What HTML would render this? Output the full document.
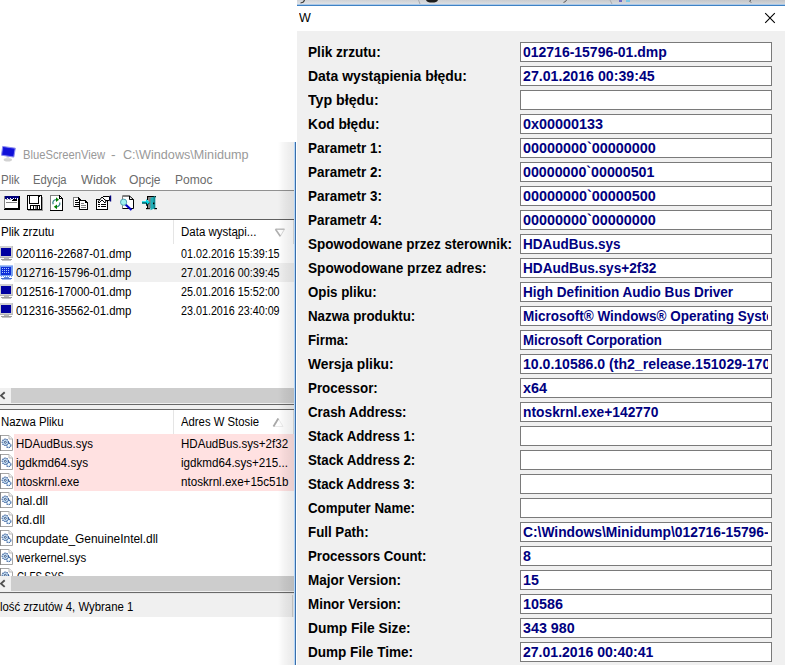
<!DOCTYPE html><html><head><meta charset="utf-8"><title>BlueScreenView</title><style>
html,body{margin:0;padding:0}
body{width:785px;height:665px;overflow:hidden;background:#fff;position:relative;font-family:"Liberation Sans",sans-serif}
div,span,svg{position:absolute}
.s,.b{white-space:pre;line-height:1;transform-origin:0 0;display:block}
.s{font-size:12px;color:#000}
.b{font-size:14px;font-weight:bold;color:#000}
.v{color:#000080}
.ttl{color:#999}
.mnu{color:#6b6b6b}
.f{left:520px;width:250px;height:18px;background:#fff;border:1px solid #7a7a7a;overflow:hidden}
.f .c{left:0;top:0;width:246.6px;height:18px;overflow:hidden}
.f .b{left:2.1px}
</style></head><body>
<div style="left:297px;top:0px;width:488px;height:4px;background:#d6dae0;background:linear-gradient(180deg,rgba(0,0,0,.06),rgba(255,255,255,.1)),linear-gradient(90deg,#dde0e4,#cdd0d4)"></div>
<svg style="left:297px;top:0" width="488" height="4" viewBox="0 0 488 4"><path d="M7.5 0 Q7 2.6 3.5 3" fill="none" stroke="#3a3a3a" stroke-width="1.2"/><path d="M121.5 0 L123 4" stroke="#a8aaae" stroke-width="1"/><path d="M129 0 H141 Q140 2.6 135 2.6 Q130 2.6 129 0Z" fill="#1c1c1c"/><path d="M269.5 0 Q269 2 266.5 2.4" fill="none" stroke="#555" stroke-width="1"/><path d="M313 0 L315 4" stroke="#a8aaae" stroke-width="1"/><rect x="322" y="0" width="3" height="2" fill="#6a6ac8"/><rect x="329" y="0" width="4" height="2" fill="#7ac8e8"/><path d="M453.5 0 Q452 1.5 454 2.5" fill="none" stroke="#444" stroke-width="1"/></svg>
<div style="left:297px;top:4px;width:488px;height:1px;background:#a9c8e8"></div>
<div style="left:297px;top:5px;width:488px;height:1px;background:#3f82c4"></div>
<div style="left:297px;top:31px;width:488px;height:634px;background:#f0f0f0"></div>
<div style="left:0px;top:190px;width:294px;height:1px;background:#919191"></div>
<div style="left:0px;top:191px;width:294px;height:28px;background:#f0f0f0"></div>
<div style="left:0px;top:219px;width:294px;height:1px;background:#5f5f5f"></div>
<div style="left:173px;top:220px;width:1px;height:24px;background:#e5e5e5"></div>
<div style="left:293px;top:220px;width:1px;height:24px;background:#e0e0e0"></div>
<div style="left:14px;top:263px;width:280px;height:19px;background:#f0f0f0"></div>
<div style="left:0px;top:388px;width:294px;height:16px;background:#f0f0f0"></div>
<div style="left:11px;top:388px;width:283px;height:15px;background:#cdcdcd"></div>
<div style="left:0px;top:404px;width:294px;height:1px;background:#696969"></div>
<div style="left:0px;top:405px;width:294px;height:4px;background:#f0f0f0"></div>
<div style="left:0px;top:409px;width:294px;height:1px;background:#696969"></div>
<div style="left:173px;top:410px;width:1px;height:24px;background:#e5e5e5"></div>
<div style="left:293px;top:410px;width:1px;height:24px;background:#e0e0e0"></div>
<div style="left:14px;top:434px;width:280px;height:57px;background:#ffe1e1"></div>
<div style="left:0px;top:576px;width:294px;height:16px;background:#f0f0f0"></div>
<div style="left:11px;top:576px;width:283px;height:15px;background:#cdcdcd"></div>
<div style="left:0px;top:592px;width:294px;height:1px;background:#696969"></div>
<div style="left:0px;top:593px;width:294px;height:24px;background:#f0f0f0"></div>
<div style="left:0px;top:593px;width:294px;height:1px;background:#e6e6e6"></div>
<div style="left:292px;top:595px;width:1px;height:22px;background:#cfcfcf"></div>
<svg style="left:0px;top:144px" width="20" height="20" viewBox="0 0 20 20"><ellipse cx="7.8" cy="15.8" rx="4.2" ry="1.8" fill="#d2d2d2"/><path d="M6.5 12 L9.5 12.5 L9 15.5 L6.5 15Z" fill="#dcdcdc"/><path d="M2.7 2.4 L15.3 4.2 L13.8 13.1 L1.5 11.2Z" fill="#1a1ae0" stroke="#8c8cf0" stroke-width="1"/><path d="M4 4 L13.8 5.4 L12.8 11.6 L3.1 10.2Z" fill="#1010d8"/></svg>
<svg style="left:4px;top:196px" width="16" height="14" viewBox="0 0 16 14" shape-rendering="crispEdges"><rect x="0" y="0" width="16" height="14" fill="#000"/><rect x="0" y="0" width="15" height="13" fill="#808080"/><rect x="1" y="1" width="14" height="12" fill="#000"/><rect x="1" y="1" width="13" height="11" fill="#fff"/><rect x="1" y="0" width="14" height="3" fill="#00007a"/><rect x="2" y="3" width="2" height="1" fill="#9a9ab0"/><rect x="5" y="3" width="2" height="1" fill="#9a9ab0"/><rect x="8" y="3" width="5" height="2" fill="#000"/><rect x="8" y="3" width="1" height="1" fill="#fff"/><rect x="2" y="6" width="11" height="1" fill="#808080"/><rect x="3" y="2" width="1" height="1" fill="#fff"/><rect x="6" y="2" width="1" height="1" fill="#fff"/><rect x="9" y="2" width="1" height="1" fill="#fff"/><rect x="11" y="2" width="1" height="1" fill="#fff"/><rect x="13" y="2" width="1" height="1" fill="#fff"/></svg>
<svg style="left:27px;top:195px" width="16" height="16" viewBox="0 0 16 16" shape-rendering="crispEdges"><rect x="0" y="0" width="15" height="15" fill="#000"/><rect x="1" y="1" width="13" height="13" fill="#fff"/><rect x="2" y="0" width="1" height="9" fill="#000"/><rect x="11" y="0" width="1" height="9" fill="#000"/><rect x="2" y="8" width="10" height="1" fill="#000"/><rect x="3" y="1" width="8" height="7" fill="#fff"/><rect x="12" y="1" width="2" height="8" fill="#fff"/><rect x="12" y="1" width="1" height="1" fill="#000"/><rect x="13" y="2" width="1" height="1" fill="#fff"/><rect x="3" y="10" width="10" height="1" fill="#000"/><rect x="3" y="10" width="1" height="4" fill="#000"/><rect x="12" y="10" width="1" height="4" fill="#000"/><rect x="4" y="11" width="8" height="3" fill="#fff"/><rect x="6" y="11" width="1" height="3" fill="#000"/><rect x="8" y="11" width="2" height="3" fill="#808080"/><rect x="10" y="11" width="1" height="3" fill="#000"/><rect x="15" y="2" width="1" height="14" fill="#9a9a9a"/><rect x="1" y="15" width="15" height="1" fill="#9a9a9a"/></svg>
<svg style="left:50px;top:195px" width="14" height="16" viewBox="0 0 14 16" shape-rendering="crispEdges"><path d="M0.5 0.5 H9.5 L12.5 3.5 V15.5 H0.5Z" fill="#fff" stroke="none"/><rect x="0" y="0" width="10" height="1" fill="#808080"/><rect x="0" y="0" width="1" height="16" fill="#808080"/><rect x="12" y="3" width="1" height="13" fill="#000"/><rect x="0" y="15" width="13" height="1" fill="#000"/><rect x="9" y="0" width="1" height="4" fill="#000"/><rect x="9" y="3" width="4" height="1" fill="#000"/><rect x="10" y="1" width="1" height="1" fill="#000"/><rect x="11" y="2" width="1" height="1" fill="#000"/><rect x="10" y="2" width="1" height="1" fill="#fff"/><g shape-rendering="auto"><path d="M3.2 9.2 A3.2 3.2 0 0 1 6.6 4.6" fill="none" stroke="#3a8a8a" stroke-width="1.3"/><path d="M6 2.3 L9 4.8 L6 7Z" fill="#008000"/><path d="M9.6 7.4 A3.2 3.2 0 0 1 6.4 11.8" fill="none" stroke="#3a8a8a" stroke-width="1.3"/><path d="M7 9.6 L3.8 11.8 L7 14.2Z" fill="#008000"/></g></svg>
<svg style="left:73px;top:197px" width="15" height="13" viewBox="0 0 15 13" shape-rendering="crispEdges"><rect x="0" y="0" width="8" height="10" fill="#000"/><rect x="1" y="1" width="6" height="8" fill="#fff"/><rect x="5" y="0" width="3" height="3" fill="#f0f0f0"/><rect x="5" y="0" width="1" height="3" fill="#000"/><rect x="5" y="2" width="3" height="1" fill="#000"/><rect x="6" y="1" width="1" height="1" fill="#000"/><rect x="2" y="3" width="3" height="1" fill="#000"/><rect x="2" y="5" width="4" height="1" fill="#000"/><rect x="2" y="7" width="4" height="1" fill="#000"/><rect x="6" y="3" width="9" height="10" fill="#000"/><rect x="7" y="4" width="7" height="8" fill="#fff"/><rect x="12" y="3" width="3" height="3" fill="#f0f0f0"/><rect x="12" y="3" width="1" height="3" fill="#000"/><rect x="12" y="5" width="3" height="1" fill="#000"/><rect x="13" y="4" width="1" height="1" fill="#000"/><rect x="8" y="6" width="3" height="1" fill="#808080"/><rect x="8" y="8" width="5" height="1" fill="#808080"/><rect x="8" y="10" width="5" height="1" fill="#808080"/><rect x="0" y="0" width="1" height="10" fill="#808080"/><rect x="0" y="0" width="5" height="1" fill="#808080"/></svg>
<svg style="left:96px;top:195px" width="16" height="16" viewBox="0 0 16 16" shape-rendering="crispEdges"><rect x="0" y="4" width="12" height="11" fill="#000"/><rect x="1" y="5" width="10" height="9" fill="#fff"/><rect x="2" y="9" width="2" height="1" fill="#000"/><rect x="5" y="9" width="5" height="1" fill="#000"/><rect x="2" y="11" width="2" height="1" fill="#000"/><rect x="5" y="11" width="5" height="1" fill="#000"/><g shape-rendering="auto"><path d="M2 7 L6 2 L10 6 L9 8 L6 5 L3 8Z" fill="#fff" stroke="#000" stroke-width="1"/><path d="M7 1.5 H13.5 V5.5 H10" fill="#fff" stroke="#000" stroke-width="1"/><path d="M14.5 0.5 V6.5" stroke="#00007a" stroke-width="1.4"/></g></svg>
<svg style="left:120px;top:195px" width="16" height="16" viewBox="0 0 16 16"><g shape-rendering="auto"><path d="M2.5 1 H9.5 L13.5 4.5 V13.5 H2.5Z" fill="#fff" stroke="#000" stroke-width="1"/><path d="M2.5 1 H9.5" stroke="#808080" stroke-width="1"/><path d="M2.5 1 V13.5" stroke="#808080"/><path d="M9.5 1 V4.5 H13.5" fill="none" stroke="#000" stroke-width="1"/><path d="M5.5 9.5 L11.5 15" stroke="#0000c8" stroke-width="2.2"/><circle cx="3.6" cy="7.2" r="3.1" fill="#9ff0f0" stroke="#50a0b0" stroke-width="1"/></g></svg>
<svg style="left:142px;top:195px" width="16" height="16" viewBox="0 0 16 16"><g shape-rendering="auto"><rect x="5" y="1" width="9" height="1.3" fill="#000"/><rect x="5" y="1" width="1.3" height="4" fill="#000"/><rect x="5" y="9" width="1.3" height="5" fill="#000"/><rect x="4" y="13" width="4" height="1.2" fill="#000"/><rect x="12" y="13" width="3" height="1.2" fill="#000"/><rect x="6.3" y="2.3" width="4" height="11" fill="#808080"/><path d="M8.5 3 L13.2 1.2 V13 L8.5 15.3Z" fill="#20b0b8"/><path d="M11.5 2 L13.2 1.2 V13 L11.5 13.8Z" fill="#108890"/><rect x="11" y="7.6" width="1.4" height="1.6" fill="#000"/><path d="M0 6.2 H4 V4 L8 7.5 L4 11 V8.8 H0Z" fill="#00d8e8"/><path d="M0 8 H4.5 V10.5 L7.5 8" fill="none" stroke="#000" stroke-width=".8"/></g></svg>
<svg style="left:0px;top:246px" width="13" height="15" viewBox="0 0 13 15" shape-rendering="crispEdges"><rect x="0" y="0" width="13" height="12" fill="#d0d0d0"/><rect x="0" y="11" width="13" height="1" fill="#b4b4b4"/><rect x="12" y="0" width="1" height="12" fill="#c0c0c0"/><rect x="1" y="2" width="10" height="8" fill="#0000a0"/><rect x="4" y="12" width="5" height="1" fill="#b8b8b8"/><rect x="1" y="13" width="11" height="1" fill="#9c9c9c"/><rect x="2" y="14" width="9" height="1" fill="#c4c4c4"/></svg>
<svg style="left:0px;top:265px" width="13" height="15" viewBox="0 0 13 15" shape-rendering="crispEdges"><rect x="0" y="0" width="13" height="12" fill="#78a0f0"/><rect x="1" y="2" width="10" height="8" fill="#1030d8"/><rect x="2" y="3" width="1" height="1" fill="#b0c8ff"/><rect x="4" y="3" width="1" height="1" fill="#b0c8ff"/><rect x="6" y="3" width="1" height="1" fill="#b0c8ff"/><rect x="8" y="3" width="1" height="1" fill="#b0c8ff"/><rect x="2" y="5" width="1" height="1" fill="#b0c8ff"/><rect x="4" y="5" width="1" height="1" fill="#b0c8ff"/><rect x="6" y="5" width="1" height="1" fill="#b0c8ff"/><rect x="8" y="5" width="1" height="1" fill="#b0c8ff"/><rect x="2" y="7" width="1" height="1" fill="#b0c8ff"/><rect x="4" y="7" width="1" height="1" fill="#b0c8ff"/><rect x="6" y="7" width="1" height="1" fill="#b0c8ff"/><rect x="8" y="7" width="1" height="1" fill="#b0c8ff"/><rect x="0" y="0" width="13" height="1" fill="#a8c4f8"/><rect x="0" y="11" width="1" height="1" fill="#fff"/><rect x="2" y="11" width="1" height="1" fill="#fff"/><rect x="4" y="11" width="1" height="1" fill="#fff"/><rect x="6" y="11" width="1" height="1" fill="#fff"/><rect x="8" y="11" width="1" height="1" fill="#fff"/><rect x="10" y="11" width="1" height="1" fill="#fff"/><rect x="12" y="11" width="1" height="1" fill="#fff"/><rect x="4" y="12" width="5" height="1" fill="#6088e0"/><rect x="1" y="13" width="11" height="1" fill="#4870d0"/><rect x="2" y="14" width="9" height="1" fill="#a0b8f0"/></svg>
<svg style="left:0px;top:284px" width="13" height="15" viewBox="0 0 13 15" shape-rendering="crispEdges"><rect x="0" y="0" width="13" height="12" fill="#d0d0d0"/><rect x="0" y="11" width="13" height="1" fill="#b4b4b4"/><rect x="12" y="0" width="1" height="12" fill="#c0c0c0"/><rect x="1" y="2" width="10" height="8" fill="#0000a0"/><rect x="4" y="12" width="5" height="1" fill="#b8b8b8"/><rect x="1" y="13" width="11" height="1" fill="#9c9c9c"/><rect x="2" y="14" width="9" height="1" fill="#c4c4c4"/></svg>
<svg style="left:0px;top:303px" width="13" height="15" viewBox="0 0 13 15" shape-rendering="crispEdges"><rect x="0" y="0" width="13" height="12" fill="#d0d0d0"/><rect x="0" y="11" width="13" height="1" fill="#b4b4b4"/><rect x="12" y="0" width="1" height="12" fill="#c0c0c0"/><rect x="1" y="2" width="10" height="8" fill="#0000a0"/><rect x="4" y="12" width="5" height="1" fill="#b8b8b8"/><rect x="1" y="13" width="11" height="1" fill="#9c9c9c"/><rect x="2" y="14" width="9" height="1" fill="#c4c4c4"/></svg>
<svg style="left:274px;top:228px" width="12" height="10" viewBox="0 0 12 10"><path d="M1.5 1.2 H10.5 L6.3 8.3Z" fill="#fff" stroke="#dadada" stroke-width="1"/><path d="M1.5 1.2 H10.5" stroke="#b8b8b8" stroke-width="1.2"/><path d="M1.5 1.2 L6.3 8.3" stroke="#b0b0b0" stroke-width="1.6"/></svg>
<svg style="left:272px;top:417px" width="14" height="11" viewBox="0 0 14 11"><path d="M1.5 9.5 H11 L6.3 1.5Z" fill="#fff" stroke="#ececec" stroke-width="1"/><path d="M1.5 9.5 L6.3 1.5" stroke="#a8a8a8" stroke-width="1.8"/></svg>
<svg style="left:0px;top:388px" width="8" height="15" viewBox="0 0 8 15"><path d="M4.7 4.3 L1 7.6 L4.7 10.9" fill="none" stroke="#505050" stroke-width="1.9"/></svg>
<svg style="left:0px;top:576px" width="8" height="15" viewBox="0 0 8 15"><path d="M4.7 4.3 L1 7.6 L4.7 10.9" fill="none" stroke="#505050" stroke-width="1.9"/></svg>
<svg style="left:0px;top:435px" width="14" height="16" viewBox="0 0 14 16"><path d="M-2.5 0.5 H9 L12.5 4 V15.5 H-2.5Z" fill="#fff" stroke="#a6a6a6" stroke-width="1"/><path d="M9 0.5 V4 H12.5" fill="#f4f4f4" stroke="#b8b8b8" stroke-width="1"/><path d="M0.5 0 V16" stroke="#8a8a8a" stroke-width="1"/><circle cx="8.6" cy="10.4" r="2.3" fill="#d8ecfa" stroke="#3c64a0" stroke-width="1.1" stroke-dasharray="1.3 .7"/><circle cx="5.3" cy="7.3" r="3.1" fill="#cfe6f8" stroke="#365c98" stroke-width="1.2" stroke-dasharray="1.4 .8"/><circle cx="5.3" cy="7.3" r="1" fill="#fff" stroke="#1c3c70" stroke-width=".8"/><circle cx="8.6" cy="10.4" r=".7" fill="#fff"/></svg>
<svg style="left:0px;top:454px" width="14" height="16" viewBox="0 0 14 16"><path d="M-2.5 0.5 H9 L12.5 4 V15.5 H-2.5Z" fill="#fff" stroke="#a6a6a6" stroke-width="1"/><path d="M9 0.5 V4 H12.5" fill="#f4f4f4" stroke="#b8b8b8" stroke-width="1"/><path d="M0.5 0 V16" stroke="#8a8a8a" stroke-width="1"/><circle cx="8.6" cy="10.4" r="2.3" fill="#d8ecfa" stroke="#3c64a0" stroke-width="1.1" stroke-dasharray="1.3 .7"/><circle cx="5.3" cy="7.3" r="3.1" fill="#cfe6f8" stroke="#365c98" stroke-width="1.2" stroke-dasharray="1.4 .8"/><circle cx="5.3" cy="7.3" r="1" fill="#fff" stroke="#1c3c70" stroke-width=".8"/><circle cx="8.6" cy="10.4" r=".7" fill="#fff"/></svg>
<svg style="left:0px;top:473px" width="14" height="16" viewBox="0 0 14 16"><path d="M-2.5 0.5 H9 L12.5 4 V15.5 H-2.5Z" fill="#fff" stroke="#a6a6a6" stroke-width="1"/><path d="M9 0.5 V4 H12.5" fill="#f4f4f4" stroke="#b8b8b8" stroke-width="1"/><path d="M0.5 0 V16" stroke="#8a8a8a" stroke-width="1"/><circle cx="8.6" cy="10.4" r="2.3" fill="#d8ecfa" stroke="#3c64a0" stroke-width="1.1" stroke-dasharray="1.3 .7"/><circle cx="5.3" cy="7.3" r="3.1" fill="#cfe6f8" stroke="#365c98" stroke-width="1.2" stroke-dasharray="1.4 .8"/><circle cx="5.3" cy="7.3" r="1" fill="#fff" stroke="#1c3c70" stroke-width=".8"/><circle cx="8.6" cy="10.4" r=".7" fill="#fff"/></svg>
<svg style="left:0px;top:492px" width="14" height="16" viewBox="0 0 14 16"><path d="M-2.5 0.5 H9 L12.5 4 V15.5 H-2.5Z" fill="#fff" stroke="#a6a6a6" stroke-width="1"/><path d="M9 0.5 V4 H12.5" fill="#f4f4f4" stroke="#b8b8b8" stroke-width="1"/><path d="M0.5 0 V16" stroke="#8a8a8a" stroke-width="1"/><circle cx="8.6" cy="10.4" r="2.3" fill="#d8ecfa" stroke="#3c64a0" stroke-width="1.1" stroke-dasharray="1.3 .7"/><circle cx="5.3" cy="7.3" r="3.1" fill="#cfe6f8" stroke="#365c98" stroke-width="1.2" stroke-dasharray="1.4 .8"/><circle cx="5.3" cy="7.3" r="1" fill="#fff" stroke="#1c3c70" stroke-width=".8"/><circle cx="8.6" cy="10.4" r=".7" fill="#fff"/></svg>
<svg style="left:0px;top:511px" width="14" height="16" viewBox="0 0 14 16"><path d="M-2.5 0.5 H9 L12.5 4 V15.5 H-2.5Z" fill="#fff" stroke="#a6a6a6" stroke-width="1"/><path d="M9 0.5 V4 H12.5" fill="#f4f4f4" stroke="#b8b8b8" stroke-width="1"/><path d="M0.5 0 V16" stroke="#8a8a8a" stroke-width="1"/><circle cx="8.6" cy="10.4" r="2.3" fill="#d8ecfa" stroke="#3c64a0" stroke-width="1.1" stroke-dasharray="1.3 .7"/><circle cx="5.3" cy="7.3" r="3.1" fill="#cfe6f8" stroke="#365c98" stroke-width="1.2" stroke-dasharray="1.4 .8"/><circle cx="5.3" cy="7.3" r="1" fill="#fff" stroke="#1c3c70" stroke-width=".8"/><circle cx="8.6" cy="10.4" r=".7" fill="#fff"/></svg>
<svg style="left:0px;top:530px" width="14" height="16" viewBox="0 0 14 16"><path d="M-2.5 0.5 H9 L12.5 4 V15.5 H-2.5Z" fill="#fff" stroke="#a6a6a6" stroke-width="1"/><path d="M9 0.5 V4 H12.5" fill="#f4f4f4" stroke="#b8b8b8" stroke-width="1"/><path d="M0.5 0 V16" stroke="#8a8a8a" stroke-width="1"/><circle cx="8.6" cy="10.4" r="2.3" fill="#d8ecfa" stroke="#3c64a0" stroke-width="1.1" stroke-dasharray="1.3 .7"/><circle cx="5.3" cy="7.3" r="3.1" fill="#cfe6f8" stroke="#365c98" stroke-width="1.2" stroke-dasharray="1.4 .8"/><circle cx="5.3" cy="7.3" r="1" fill="#fff" stroke="#1c3c70" stroke-width=".8"/><circle cx="8.6" cy="10.4" r=".7" fill="#fff"/></svg>
<svg style="left:0px;top:549px" width="14" height="16" viewBox="0 0 14 16"><path d="M-2.5 0.5 H9 L12.5 4 V15.5 H-2.5Z" fill="#fff" stroke="#a6a6a6" stroke-width="1"/><path d="M9 0.5 V4 H12.5" fill="#f4f4f4" stroke="#b8b8b8" stroke-width="1"/><path d="M0.5 0 V16" stroke="#8a8a8a" stroke-width="1"/><circle cx="8.6" cy="10.4" r="2.3" fill="#d8ecfa" stroke="#3c64a0" stroke-width="1.1" stroke-dasharray="1.3 .7"/><circle cx="5.3" cy="7.3" r="3.1" fill="#cfe6f8" stroke="#365c98" stroke-width="1.2" stroke-dasharray="1.4 .8"/><circle cx="5.3" cy="7.3" r="1" fill="#fff" stroke="#1c3c70" stroke-width=".8"/><circle cx="8.6" cy="10.4" r=".7" fill="#fff"/></svg>
<svg style="left:0px;top:568px" width="14" height="8" viewBox="0 0 14 8"><path d="M-2.5 0.5 H9 L12.5 4 V15.5 H-2.5Z" fill="#fff" stroke="#a6a6a6" stroke-width="1"/><path d="M9 0.5 V4 H12.5" fill="#f4f4f4" stroke="#b8b8b8" stroke-width="1"/><path d="M0.5 0 V16" stroke="#8a8a8a" stroke-width="1"/><circle cx="8.6" cy="10.4" r="2.3" fill="#d8ecfa" stroke="#3c64a0" stroke-width="1.1" stroke-dasharray="1.3 .7"/><circle cx="5.3" cy="7.3" r="3.1" fill="#cfe6f8" stroke="#365c98" stroke-width="1.2" stroke-dasharray="1.4 .8"/><circle cx="5.3" cy="7.3" r="1" fill="#fff" stroke="#1c3c70" stroke-width=".8"/><circle cx="8.6" cy="10.4" r=".7" fill="#fff"/></svg>
<svg style="left:764px;top:12px" width="12" height="12" viewBox="0 0 12 12"><path d="M1.2 1.2 L10.8 10.8 M10.8 1.2 L1.2 10.8" stroke="#000" stroke-width="1.1" fill="none"/></svg>
<span id="t0" class="s ttl" style="left:22.8px;top:149.44px;transform:scaleX(0.9335)">BlueScreenView</span>
<span id="t1" class="s ttl" style="left:111.2px;top:149.44px;transform:scaleX(1.1500)">-</span>
<span id="t2" class="s ttl" style="left:122.8px;top:149.44px;transform:scaleX(1.0513)">C:\Windows\Minidump</span>
<span id="t3" class="s mnu" style="left:1px;top:173.64px;transform:scaleX(0.9616)">Plik</span>
<span id="t4" class="s mnu" style="left:33.4px;top:173.64px;transform:scaleX(0.9325)">Edycja</span>
<span id="t5" class="s mnu" style="left:80.8px;top:173.64px;transform:scaleX(1.0497)">Widok</span>
<span id="t6" class="s mnu" style="left:129.3px;top:173.64px;transform:scaleX(1.0077)">Opcje</span>
<span id="t7" class="s mnu" style="left:174.7px;top:173.64px;transform:scaleX(1.0038)">Pomoc</span>
<span id="t8" class="s" style="left:1px;top:225.64px;transform:scaleX(0.9628)">Plik zrzutu</span>
<span id="t9" class="s" style="left:180.5px;top:225.64px;transform:scaleX(0.9580)">Data wystąpi...</span>
<span id="t10" class="s" style="left:16.2px;top:247.54px;transform:scaleX(0.9573)">020116-22687-01.dmp</span>
<span id="t11" class="s" style="left:180.5px;top:247.54px;transform:scaleX(0.8955)">01.02.2016 15:39:15</span>
<span id="t12" class="s" style="left:16.2px;top:266.54px;transform:scaleX(0.9503)">012716-15796-01.dmp</span>
<span id="t13" class="s" style="left:180.5px;top:266.54px;transform:scaleX(0.8955)">27.01.2016 00:39:45</span>
<span id="t14" class="s" style="left:16.2px;top:285.54px;transform:scaleX(0.9503)">012516-17000-01.dmp</span>
<span id="t15" class="s" style="left:180.5px;top:285.54px;transform:scaleX(0.8955)">25.01.2016 15:52:00</span>
<span id="t16" class="s" style="left:16.2px;top:304.54px;transform:scaleX(0.9503)">012316-35562-01.dmp</span>
<span id="t17" class="s" style="left:180.5px;top:304.54px;transform:scaleX(0.8955)">23.01.2016 23:40:09</span>
<span id="t18" class="s" style="left:1px;top:416.04px;transform:scaleX(0.9480)">Nazwa Pliku</span>
<span id="t19" class="s" style="left:180.5px;top:416.04px;transform:scaleX(0.9431)">Adres W Stosie</span>
<span id="t20" class="s" style="left:16.4px;top:437.84px;transform:scaleX(0.9529)">HDAudBus.sys</span>
<span id="t21" class="s" style="left:180.5px;top:437.84px;transform:scaleX(0.9643)">HDAudBus.sys+2f32</span>
<span id="t22" class="s" style="left:16.4px;top:456.84px;transform:scaleX(0.9826)">igdkmd64.sys</span>
<span id="t23" class="s" style="left:180.5px;top:456.84px;transform:scaleX(0.9682)">igdkmd64.sys+215...</span>
<span id="t24" class="s" style="left:16.4px;top:475.84px;transform:scaleX(0.9783)">ntoskrnl.exe</span>
<span id="t25" class="s" style="left:180.5px;top:475.84px;transform:scaleX(0.9678)">ntoskrnl.exe+15c51b</span>
<span id="t26" class="s" style="left:16.4px;top:494.84px;transform:scaleX(1.0172)">hal.dll</span>
<span id="t27" class="s" style="left:16.4px;top:513.84px;transform:scaleX(1.0316)">kd.dll</span>
<span id="t28" class="s" style="left:16.4px;top:532.84px;transform:scaleX(0.9946)">mcupdate_GenuineIntel.dll</span>
<span id="t29" class="s" style="left:16.4px;top:551.84px;transform:scaleX(0.9569)">werkernel.sys</span>
<span id="t30" class="s" style="left:0.3px;top:601.24px;transform:scaleX(0.9479)">lość zrzutów 4, Wybrane 1</span>
<span id="t31" class="s" style="left:299px;top:12.04px;transform:scaleX(1.0417)">W</span>
<span id="t32" class="b" style="left:307.6px;top:44.85px;transform:scaleX(0.9736)">Plik zrzutu:</span>
<span id="t33" class="b" style="left:307.6px;top:68.85px;transform:scaleX(0.9970)">Data wystąpienia błędu:</span>
<span id="t34" class="b" style="left:307.6px;top:92.85px;transform:scaleX(1.0124)">Typ błędu:</span>
<span id="t35" class="b" style="left:307.6px;top:116.85px;transform:scaleX(0.9780)">Kod błędu:</span>
<span id="t36" class="b" style="left:307.6px;top:140.85px;transform:scaleX(0.9605)">Parametr 1:</span>
<span id="t37" class="b" style="left:307.6px;top:164.85px;transform:scaleX(0.9605)">Parametr 2:</span>
<span id="t38" class="b" style="left:307.6px;top:188.85px;transform:scaleX(0.9605)">Parametr 3:</span>
<span id="t39" class="b" style="left:307.6px;top:212.85px;transform:scaleX(0.9605)">Parametr 4:</span>
<span id="t40" class="b" style="left:307.6px;top:236.85px;transform:scaleX(0.9641)">Spowodowane przez sterownik:</span>
<span id="t41" class="b" style="left:307.6px;top:260.85px;transform:scaleX(0.9723)">Spowodowane przez adres:</span>
<span id="t42" class="b" style="left:307.6px;top:284.85px;transform:scaleX(0.9483)">Opis pliku:</span>
<span id="t43" class="b" style="left:307.6px;top:308.85px;transform:scaleX(0.9514)">Nazwa produktu:</span>
<span id="t44" class="b" style="left:307.6px;top:332.85px;transform:scaleX(0.9463)">Firma:</span>
<span id="t45" class="b" style="left:307.6px;top:356.85px;transform:scaleX(0.9851)">Wersja pliku:</span>
<span id="t46" class="b" style="left:307.6px;top:380.85px;transform:scaleX(0.9541)">Processor:</span>
<span id="t47" class="b" style="left:307.6px;top:404.85px;transform:scaleX(0.9494)">Crash Address:</span>
<span id="t48" class="b" style="left:307.6px;top:428.85px;transform:scaleX(0.9488)">Stack Address 1:</span>
<span id="t49" class="b" style="left:307.6px;top:452.85px;transform:scaleX(0.9488)">Stack Address 2:</span>
<span id="t50" class="b" style="left:307.6px;top:476.85px;transform:scaleX(0.9461)">Stack Address 3:</span>
<span id="t51" class="b" style="left:307.6px;top:500.85px;transform:scaleX(0.9486)">Computer Name:</span>
<span id="t52" class="b" style="left:307.6px;top:524.85px;transform:scaleX(0.9501)">Full Path:</span>
<span id="t53" class="b" style="left:307.6px;top:548.85px;transform:scaleX(0.9453)">Processors Count:</span>
<span id="t54" class="b" style="left:307.6px;top:572.85px;transform:scaleX(0.9640)">Major Version:</span>
<span id="t55" class="b" style="left:307.6px;top:596.85px;transform:scaleX(0.9565)">Minor Version:</span>
<span id="t56" class="b" style="left:307.6px;top:620.85px;transform:scaleX(0.9853)">Dump File Size:</span>
<span id="t57" class="b" style="left:307.6px;top:644.85px;transform:scaleX(0.9664)">Dump File Time:</span>
<div class="f" style="top:42px"><div class="c"><span id="f0" class="b v" style="top:1.85px;transform:scaleX(0.9986)">012716-15796-01.dmp</span></div></div>
<div class="f" style="top:66px"><div class="c"><span id="f1" class="b v" style="top:1.85px;transform:scaleX(1.0131)">27.01.2016 00:39:45</span></div></div>
<div class="f" style="top:90px"><div class="c"></div></div>
<div class="f" style="top:114px"><div class="c"><span id="f3" class="b v" style="top:1.85px;transform:scaleX(1.0286)">0x00000133</span></div></div>
<div class="f" style="top:138px"><div class="c"><span id="f4" class="b v" style="top:1.85px;transform:scaleX(1.0275)">00000000`00000000</span></div></div>
<div class="f" style="top:162px"><div class="c"><span id="f5" class="b v" style="top:1.85px;transform:scaleX(1.0166)">00000000`00000501</span></div></div>
<div class="f" style="top:186px"><div class="c"><span id="f6" class="b v" style="top:1.85px;transform:scaleX(1.0275)">00000000`00000500</span></div></div>
<div class="f" style="top:210px"><div class="c"><span id="f7" class="b v" style="top:1.85px;transform:scaleX(1.0275)">00000000`00000000</span></div></div>
<div class="f" style="top:234px"><div class="c"><span id="f8" class="b v" style="top:1.85px;transform:scaleX(0.9630)">HDAudBus.sys</span></div></div>
<div class="f" style="top:258px"><div class="c"><span id="f9" class="b v" style="top:1.85px;transform:scaleX(0.9714)">HDAudBus.sys+2f32</span></div></div>
<div class="f" style="top:282px"><div class="c"><span id="f10" class="b v" style="top:1.85px;transform:scaleX(0.9670)">High Definition Audio Bus Driver</span></div></div>
<div class="f" style="top:306px"><div class="c"><span id="f11" class="b v" style="top:1.85px;transform:scaleX(0.9639)">Microsoft® Windows® Operating System</span></div></div>
<div class="f" style="top:330px"><div class="c"><span id="f12" class="b v" style="top:1.85px;transform:scaleX(0.9449)">Microsoft Corporation</span></div></div>
<div class="f" style="top:354px"><div class="c"><span id="f13" class="b v" style="top:1.85px;transform:scaleX(1.0050)">10.0.10586.0 (th2_release.151029-1700)</span></div></div>
<div class="f" style="top:378px"><div class="c"><span id="f14" class="b v" style="top:1.85px;transform:scaleX(1.0274)">x64</span></div></div>
<div class="f" style="top:402px"><div class="c"><span id="f15" class="b v" style="top:1.85px;transform:scaleX(0.9856)">ntoskrnl.exe+142770</span></div></div>
<div class="f" style="top:426px"><div class="c"></div></div>
<div class="f" style="top:450px"><div class="c"></div></div>
<div class="f" style="top:474px"><div class="c"></div></div>
<div class="f" style="top:498px"><div class="c"></div></div>
<div class="f" style="top:522px"><div class="c"><span id="f20" class="b v" style="top:1.85px;transform:scaleX(0.9870)">C:\Windows\Minidump\012716-15796-01.dmp</span></div></div>
<div class="f" style="top:546px"><div class="c"><span id="f21" class="b v" style="top:1.85px;transform:scaleX(1.0132)">8</span></div></div>
<div class="f" style="top:570px"><div class="c"><span id="f22" class="b v" style="top:1.85px;transform:scaleX(1.0142)">15</span></div></div>
<div class="f" style="top:594px"><div class="c"><span id="f23" class="b v" style="top:1.85px;transform:scaleX(1.0247)">10586</span></div></div>
<div class="f" style="top:618px"><div class="c"><span id="f24" class="b v" style="top:1.85px;transform:scaleX(1.0196)">343 980</span></div></div>
<div class="f" style="top:642px"><div class="c"><span id="f25" class="b v" style="top:1.85px;transform:scaleX(1.0031)">27.01.2016 00:40:41</span></div></div>
<div style="left:0;top:567px;width:294px;height:9px;overflow:hidden"><span id="clfs" class="s" style="left:17.2px;top:3.84px;transform:scaleX(0.8116)">CLFS.SYS</span></div>
<div style="left:278px;top:142px;width:16px;height:523px;background:linear-gradient(90deg,rgba(0,0,0,0),rgba(0,0,0,.045) 40%,rgba(0,0,0,.085))"></div><div style="left:294px;top:142px;width:1px;height:523px;background:#b2d6fa"></div><div style="left:295px;top:142px;width:1px;height:523px;background:#3b6ea8"></div>
</body></html>
